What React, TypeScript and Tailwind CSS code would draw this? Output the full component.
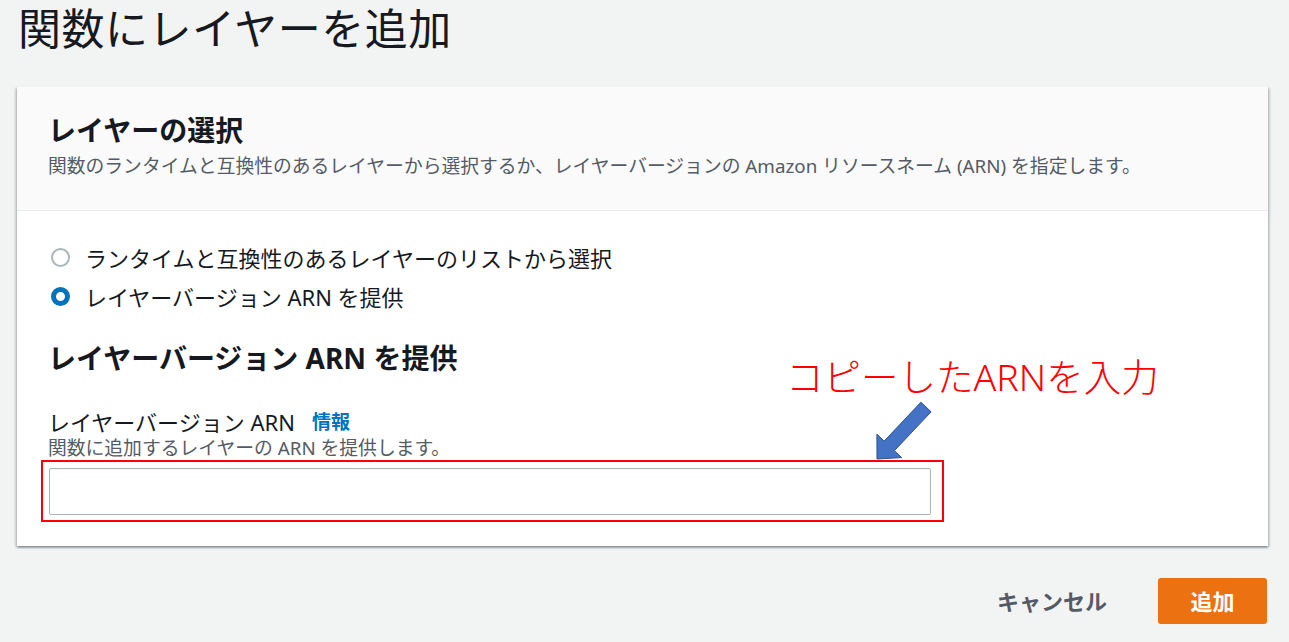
import React from "react";

const font = "font-['Noto_Sans','Noto_Sans_CJK_JP',sans-serif]";

function Radio({ checked, label }: { checked?: boolean; label: string }) {
  return (
    <div className="flex items-center h-[39px] gap-[15px]">
      <span
        className={
          checked
            ? "w-[19px] h-[19px] rounded-full border-[5px] border-[#0073bb] bg-white ml-[3px]"
            : "w-[19px] h-[19px] rounded-full border-2 border-[#aab7b8] bg-white ml-[3px]"
        }
      />
      <span className="text-[22px] leading-[32px] text-[#16191f]">{label}</span>
    </div>
  );
}

export default function App() {
  return (
    <div className={`relative min-h-[642px] w-[1289px] bg-[#f2f3f3] ${font}`}>
      <div className="h-[87px] pl-[18px] pt-[4px]">
        <h1 className="text-[43px] leading-[50px] tracking-[0.5px] text-[#16191f] font-normal">関数にレイヤーを追加</h1>
      </div>

      <div className="ml-[17px] w-[1251px] bg-white shadow-[0_2px_2px_rgba(0,28,36,0.3),2px_1px_2px_rgba(0,28,36,0.15),-2px_1px_2px_rgba(0,28,36,0.15)]">
        <div className="bg-[#fafafa] border-b border-[#eaeded] pl-[31px] pt-[26px] pb-[32px]">
          <h2 className="text-[28px] leading-[34px] font-bold text-[#16191f]">レイヤーの選択</h2>
          <p className="mt-[7px] text-[18.8px] leading-[24px] text-[#545b64]">
            関数のランタイムと互換性のあるレイヤーから選択するか、レイヤーバージョンの Amazon リソースネーム (ARN) を指定します。
          </p>
        </div>

        <div className="pl-[31px] pt-[27px] pb-[24px]">
          <Radio label="ランタイムと互換性のあるレイヤーのリストから選択" />
          <Radio checked label="レイヤーバージョン ARN を提供" />

          <h2 className="mt-[25px] text-[28px] leading-[34px] font-bold text-[#16191f]">レイヤーバージョン ARN を提供</h2>

          <div className="mt-[33px] flex items-center gap-[17px] text-[22px] leading-[28px]">
            <span className="text-[#16191f]">レイヤーバージョン ARN</span>
            <span className="text-[#0073bb] font-bold text-[19px]">情報</span>
          </div>
          <p className="text-[18.8px] leading-[24px] text-[#545b64]">関数に追加するレイヤーの ARN を提供します。</p>

          <div className="-ml-[7px] w-[903px] border-2 border-[#ff0000] pt-[6px] pb-[5px] pl-[6px] pr-[11px]">
            <div className="h-[47px] w-full rounded-[2px] border border-[#aab7b8] bg-white shadow-[inset_0_1px_1px_rgba(0,0,0,0.05)]" />
          </div>
        </div>
      </div>

      <div className="flex items-center justify-end gap-[51px] pr-[22px] mt-[32px]">
        <span className="text-[22px] font-bold text-[#545b64]">キャンセル</span>
        <button className="w-[109px] h-[46px] rounded-[3px] bg-[#ec7211] text-white text-[22px] font-bold">追加</button>
      </div>

      <div className="absolute left-[786px] top-[355px] text-[37.5px] leading-[44px] text-[#ff0000] font-light">
        コピーしたARNを入力
      </div>
      <svg className="absolute left-[860px] top-[395px]" width="80" height="75" viewBox="0 0 80 75">
        <polygon
          points="71.1,16.8 60.9,7.2 24.2,46.1 16.9,39.2 17,64 41.7,62.6 34.4,55.7"
          fill="#4472c4"
          stroke="#2f528f"
          strokeWidth="1"
          strokeLinejoin="miter"
        />
      </svg>
    </div>
  );
}
